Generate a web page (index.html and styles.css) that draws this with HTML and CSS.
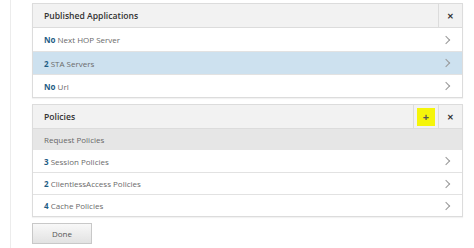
FILE: index.html
```html
<!DOCTYPE html>
<html lang="en">
<head>
    <meta charset="UTF-8">
    <title>Gateway</title>
    <link rel="stylesheet" href="styles.css">
</head>
<body>

    <div class="page">

        <section class="panel">
            <div class="panel-head">
                <span class="panel-title">Published Applications</span>
                <button class="head-btn close">&#x2715;</button>
            </div>
            <ul class="rows">
                <li class="row"><span><b>No</b> Next HOP Server</span><i class="chev"></i></li>
                <li class="row selected"><span><b>2</b> STA Servers</span><i class="chev"></i></li>
                <li class="row"><span><b>No</b> Url</span><i class="chev"></i></li>
            </ul>
        </section>

        <section class="panel">
            <div class="panel-head">
                <span class="panel-title">Policies</span>
                <button class="head-btn add"><span class="plus">+</span></button>
                <button class="head-btn close">&#x2715;</button>
            </div>
            <div class="subhead">Request Policies</div>
            <ul class="rows compact">
                <li class="row"><span><b>3</b> Session Policies</span><i class="chev"></i></li>
                <li class="row"><span><b>2</b> ClientlessAccess Policies</span><i class="chev"></i></li>
                <li class="row"><span><b>4</b> Cache Policies</span><i class="chev"></i></li>
            </ul>
        </section>

        <button class="done">Done</button>

    </div>

</body>
</html>
```

FILE: styles.css
```css
* {
    box-sizing: border-box;
}

body {
    margin: 0;
    background: #fff;
    font-family: "Open Sans", "Noto Sans", sans-serif;
    font-size: 8px;
    color: #6a6a6a;
}

.page {
    margin-left: 10px;
    border-left: 1px solid #ececec;
    height: 248px;
    padding: 3px 11px 0 21px;
}

.panel {
    border: 1px solid #dcdcdc;
    margin-bottom: 6px;
    box-shadow: 0 1px 1px rgba(0, 0, 0, 0.05);
}

.panel-head {
    display: flex;
    align-items: stretch;
    height: 24px;
    background: #f2f2f2;
    border-bottom: 1px solid #dcdcdc;
}

.panel-title {
    flex: 1;
    display: flex;
    align-items: center;
    padding-left: 11px;
    font-weight: 600;
    font-size: 8.6px;
    color: #333;
}

.head-btn {
    width: 24px;
    border: 0;
    border-left: 1px solid #dcdcdc;
    background: transparent;
    padding: 0;
    font-family: inherit;
    color: #333;
    display: flex;
    align-items: center;
    justify-content: center;
}

.close {
    font-size: 8px;
    font-weight: 700;
}

.add {
    width: 25px;
}

.plus {
    width: 18px;
    height: 18px;
    background: #f5f50a;
    display: flex;
    align-items: center;
    justify-content: center;
    font-size: 11px;
    font-weight: 700;
    color: #555;
}

.subhead {
    height: 21px;
    display: flex;
    align-items: center;
    padding-left: 11px;
    background: #e6e6e6;
    color: #666;
}

.rows {
    list-style: none;
    margin: 0;
    padding: 0;
}

.row {
    height: 23px;
    display: flex;
    align-items: center;
    justify-content: space-between;
    padding: 0 11px 0 11px;
    border-top: 1px solid #e2e2e2;
}

.compact .row {
    height: 22px;
}

.row:first-child {
    border-top: 0;
}

.row b {
    color: #1f5d85;
}

.row.selected {
    background: #cde1ef;
}

.chev {
    width: 6px;
    height: 6px;
    border-top: 1px solid #999;
    border-right: 1px solid #999;
    transform: rotate(45deg);
    margin-right: 2px;
}

.done {
    width: 60px;
    height: 21px;
    border: 1px solid #c8c8c8;
    background: linear-gradient(#f8f8f8, #e2e2e2);
    font-family: inherit;
    font-size: 8px;
    color: #555;
}
```
